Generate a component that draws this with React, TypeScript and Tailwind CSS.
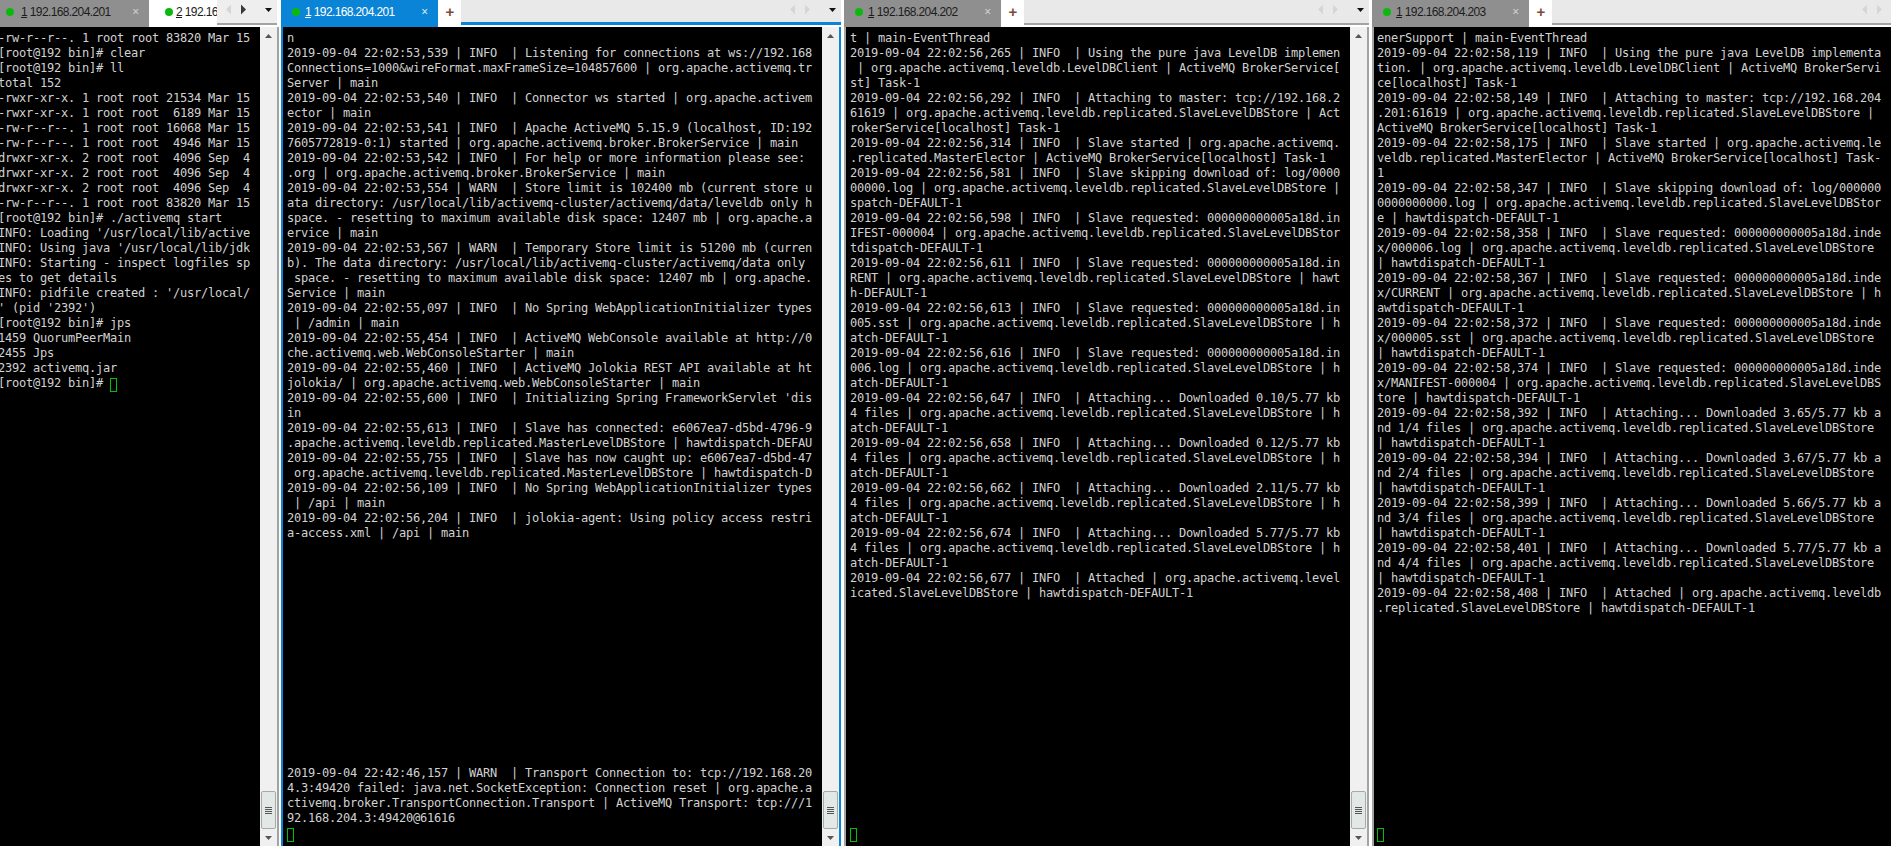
// App.tsx
const pane1 = [
  "-rw-r--r--. 1 root root 83820 Mar 15",
  "[root@192 bin]# clear",
  "[root@192 bin]# ll",
  "total 152",
  "-rwxr-xr-x. 1 root root 21534 Mar 15",
  "-rwxr-xr-x. 1 root root  6189 Mar 15",
  "-rw-r--r--. 1 root root 16068 Mar 15",
  "-rw-r--r--. 1 root root  4946 Mar 15",
  "drwxr-xr-x. 2 root root  4096 Sep  4",
  "drwxr-xr-x. 2 root root  4096 Sep  4",
  "drwxr-xr-x. 2 root root  4096 Sep  4",
  "-rw-r--r--. 1 root root 83820 Mar 15",
  "[root@192 bin]# ./activemq start",
  "INFO: Loading '/usr/local/lib/active",
  "INFO: Using java '/usr/local/lib/jdk",
  "INFO: Starting - inspect logfiles sp",
  "es to get details",
  "INFO: pidfile created : '/usr/local/",
  "' (pid '2392')",
  "[root@192 bin]# jps",
  "1459 QuorumPeerMain",
  "2455 Jps",
  "2392 activemq.jar",
  "[root@192 bin]# ",
];

const pane2 = [
  "n",
  "2019-09-04 22:02:53,539 | INFO  | Listening for connections at ws://192.168",
  "Connections=1000&wireFormat.maxFrameSize=104857600 | org.apache.activemq.tr",
  "Server | main",
  "2019-09-04 22:02:53,540 | INFO  | Connector ws started | org.apache.activem",
  "ector | main",
  "2019-09-04 22:02:53,541 | INFO  | Apache ActiveMQ 5.15.9 (localhost, ID:192",
  "7605772819-0:1) started | org.apache.activemq.broker.BrokerService | main",
  "2019-09-04 22:02:53,542 | INFO  | For help or more information please see:",
  ".org | org.apache.activemq.broker.BrokerService | main",
  "2019-09-04 22:02:53,554 | WARN  | Store limit is 102400 mb (current store u",
  "ata directory: /usr/local/lib/activemq-cluster/activemq/data/leveldb only h",
  "space. - resetting to maximum available disk space: 12407 mb | org.apache.a",
  "ervice | main",
  "2019-09-04 22:02:53,567 | WARN  | Temporary Store limit is 51200 mb (curren",
  "b). The data directory: /usr/local/lib/activemq-cluster/activemq/data only",
  " space. - resetting to maximum available disk space: 12407 mb | org.apache.",
  "Service | main",
  "2019-09-04 22:02:55,097 | INFO  | No Spring WebApplicationInitializer types",
  " | /admin | main",
  "2019-09-04 22:02:55,454 | INFO  | ActiveMQ WebConsole available at http://0",
  "che.activemq.web.WebConsoleStarter | main",
  "2019-09-04 22:02:55,460 | INFO  | ActiveMQ Jolokia REST API available at ht",
  "jolokia/ | org.apache.activemq.web.WebConsoleStarter | main",
  "2019-09-04 22:02:55,600 | INFO  | Initializing Spring FrameworkServlet 'dis",
  "in",
  "2019-09-04 22:02:55,613 | INFO  | Slave has connected: e6067ea7-d5bd-4796-9",
  ".apache.activemq.leveldb.replicated.MasterLevelDBStore | hawtdispatch-DEFAU",
  "2019-09-04 22:02:55,755 | INFO  | Slave has now caught up: e6067ea7-d5bd-47",
  " org.apache.activemq.leveldb.replicated.MasterLevelDBStore | hawtdispatch-D",
  "2019-09-04 22:02:56,109 | INFO  | No Spring WebApplicationInitializer types",
  " | /api | main",
  "2019-09-04 22:02:56,204 | INFO  | jolokia-agent: Using policy access restri",
  "a-access.xml | /api | main",
  ...Array(15).fill(""),
  "2019-09-04 22:42:46,157 | WARN  | Transport Connection to: tcp://192.168.20",
  "4.3:49420 failed: java.net.SocketException: Connection reset | org.apache.a",
  "ctivemq.broker.TransportConnection.Transport | ActiveMQ Transport: tcp:///1",
  "92.168.204.3:49420@61616",
  "",
];

const pane3 = [
  "t | main-EventThread",
  "2019-09-04 22:02:56,265 | INFO  | Using the pure java LevelDB implemen",
  " | org.apache.activemq.leveldb.LevelDBClient | ActiveMQ BrokerService[",
  "st] Task-1",
  "2019-09-04 22:02:56,292 | INFO  | Attaching to master: tcp://192.168.2",
  "61619 | org.apache.activemq.leveldb.replicated.SlaveLevelDBStore | Act",
  "rokerService[localhost] Task-1",
  "2019-09-04 22:02:56,314 | INFO  | Slave started | org.apache.activemq.",
  ".replicated.MasterElector | ActiveMQ BrokerService[localhost] Task-1",
  "2019-09-04 22:02:56,581 | INFO  | Slave skipping download of: log/0000",
  "00000.log | org.apache.activemq.leveldb.replicated.SlaveLevelDBStore |",
  "spatch-DEFAULT-1",
  "2019-09-04 22:02:56,598 | INFO  | Slave requested: 000000000005a18d.in",
  "IFEST-000004 | org.apache.activemq.leveldb.replicated.SlaveLevelDBStor",
  "tdispatch-DEFAULT-1",
  "2019-09-04 22:02:56,611 | INFO  | Slave requested: 000000000005a18d.in",
  "RENT | org.apache.activemq.leveldb.replicated.SlaveLevelDBStore | hawt",
  "h-DEFAULT-1",
  "2019-09-04 22:02:56,613 | INFO  | Slave requested: 000000000005a18d.in",
  "005.sst | org.apache.activemq.leveldb.replicated.SlaveLevelDBStore | h",
  "atch-DEFAULT-1",
  "2019-09-04 22:02:56,616 | INFO  | Slave requested: 000000000005a18d.in",
  "006.log | org.apache.activemq.leveldb.replicated.SlaveLevelDBStore | h",
  "atch-DEFAULT-1",
  "2019-09-04 22:02:56,647 | INFO  | Attaching... Downloaded 0.10/5.77 kb",
  "4 files | org.apache.activemq.leveldb.replicated.SlaveLevelDBStore | h",
  "atch-DEFAULT-1",
  "2019-09-04 22:02:56,658 | INFO  | Attaching... Downloaded 0.12/5.77 kb",
  "4 files | org.apache.activemq.leveldb.replicated.SlaveLevelDBStore | h",
  "atch-DEFAULT-1",
  "2019-09-04 22:02:56,662 | INFO  | Attaching... Downloaded 2.11/5.77 kb",
  "4 files | org.apache.activemq.leveldb.replicated.SlaveLevelDBStore | h",
  "atch-DEFAULT-1",
  "2019-09-04 22:02:56,674 | INFO  | Attaching... Downloaded 5.77/5.77 kb",
  "4 files | org.apache.activemq.leveldb.replicated.SlaveLevelDBStore | h",
  "atch-DEFAULT-1",
  "2019-09-04 22:02:56,677 | INFO  | Attached | org.apache.activemq.level",
  "icated.SlaveLevelDBStore | hawtdispatch-DEFAULT-1",
  ...Array(16).fill(""),
];

const pane4 = [
  "enerSupport | main-EventThread",
  "2019-09-04 22:02:58,119 | INFO  | Using the pure java LevelDB implementa",
  "tion. | org.apache.activemq.leveldb.LevelDBClient | ActiveMQ BrokerServi",
  "ce[localhost] Task-1",
  "2019-09-04 22:02:58,149 | INFO  | Attaching to master: tcp://192.168.204",
  ".201:61619 | org.apache.activemq.leveldb.replicated.SlaveLevelDBStore |",
  "ActiveMQ BrokerService[localhost] Task-1",
  "2019-09-04 22:02:58,175 | INFO  | Slave started | org.apache.activemq.le",
  "veldb.replicated.MasterElector | ActiveMQ BrokerService[localhost] Task-",
  "1",
  "2019-09-04 22:02:58,347 | INFO  | Slave skipping download of: log/000000",
  "0000000000.log | org.apache.activemq.leveldb.replicated.SlaveLevelDBStor",
  "e | hawtdispatch-DEFAULT-1",
  "2019-09-04 22:02:58,358 | INFO  | Slave requested: 000000000005a18d.inde",
  "x/000006.log | org.apache.activemq.leveldb.replicated.SlaveLevelDBStore",
  "| hawtdispatch-DEFAULT-1",
  "2019-09-04 22:02:58,367 | INFO  | Slave requested: 000000000005a18d.inde",
  "x/CURRENT | org.apache.activemq.leveldb.replicated.SlaveLevelDBStore | h",
  "awtdispatch-DEFAULT-1",
  "2019-09-04 22:02:58,372 | INFO  | Slave requested: 000000000005a18d.inde",
  "x/000005.sst | org.apache.activemq.leveldb.replicated.SlaveLevelDBStore",
  "| hawtdispatch-DEFAULT-1",
  "2019-09-04 22:02:58,374 | INFO  | Slave requested: 000000000005a18d.inde",
  "x/MANIFEST-000004 | org.apache.activemq.leveldb.replicated.SlaveLevelDBS",
  "tore | hawtdispatch-DEFAULT-1",
  "2019-09-04 22:02:58,392 | INFO  | Attaching... Downloaded 3.65/5.77 kb a",
  "nd 1/4 files | org.apache.activemq.leveldb.replicated.SlaveLevelDBStore",
  "| hawtdispatch-DEFAULT-1",
  "2019-09-04 22:02:58,394 | INFO  | Attaching... Downloaded 3.67/5.77 kb a",
  "nd 2/4 files | org.apache.activemq.leveldb.replicated.SlaveLevelDBStore",
  "| hawtdispatch-DEFAULT-1",
  "2019-09-04 22:02:58,399 | INFO  | Attaching... Downloaded 5.66/5.77 kb a",
  "nd 3/4 files | org.apache.activemq.leveldb.replicated.SlaveLevelDBStore",
  "| hawtdispatch-DEFAULT-1",
  "2019-09-04 22:02:58,401 | INFO  | Attaching... Downloaded 5.77/5.77 kb a",
  "nd 4/4 files | org.apache.activemq.leveldb.replicated.SlaveLevelDBStore",
  "| hawtdispatch-DEFAULT-1",
  "2019-09-04 22:02:58,408 | INFO  | Attached | org.apache.activemq.leveldb",
  ".replicated.SlaveLevelDBStore | hawtdispatch-DEFAULT-1",
  ...Array(15).fill(""),
];

function Terminal({ lines }: { lines: string[] }) {
  return (
    <div className="pt-[4px] font-['DejaVu_Sans_Mono',monospace] text-[12px] leading-[15px] tracking-[-0.224px] text-[#d2d2d2]">
      {lines.map((line, i) => (
        <div key={i} className="flex h-[15px] whitespace-pre">
          {line}
          {i === lines.length - 1 && (
            <span className="mt-[2px] h-[14px] w-[7px] border border-[#00c000]" />
          )}
        </div>
      ))}
    </div>
  );
}

function ScrollBar() {
  return (
    <div className="flex w-[17px] shrink-0 flex-col items-center bg-[#f0f0f0]">
      <svg width="9" height="5" viewBox="0 0 9 5" className="mt-[7px]">
        <path d="M4.5 0 L8 4 L1 4 Z" fill="#555" />
      </svg>
      <div className="flex-1" />
      <div className="flex h-[38px] w-[15px] flex-col items-center justify-center gap-[1px] rounded-[2px] border border-[#a8a8a8] bg-[#e2e8e6]">
        <span className="h-[1px] w-[7px] bg-[#555]" />
        <span className="h-[1px] w-[7px] bg-[#555]" />
        <span className="h-[1px] w-[7px] bg-[#555]" />
        <span className="h-[1px] w-[7px] bg-[#555]" />
      </div>
      <svg width="9" height="5" viewBox="0 0 9 5" className="mt-[7px] mb-[5px]">
        <path d="M1 0 L8 0 L4.5 4 Z" fill="#555" />
      </svg>
    </div>
  );
}

function Dot() {
  return <span className="h-[8px] w-[8px] shrink-0 rounded-full bg-[#0db80d]" />;
}

function TabLabel({ n, rest }: { n: string; rest: string }) {
  return (
    <span className="font-['Liberation_Sans',sans-serif] text-[12px] tracking-[-0.62px] whitespace-pre">
      <span className="underline">{n}</span> {rest}
    </span>
  );
}

function Tab({ rest, active }: { rest: string; active?: boolean }) {
  return (
    <div
      className={`flex h-[27px] w-[157px] shrink-0 items-center pb-[3px] ${
        active ? "bg-[#0a84d6] text-white" : "bg-[#8f8f8f] text-[#1c1c1c]"
      }`}
    >
      <span className="flex w-[24px] justify-end pr-[5px]">
        <Dot />
      </span>
      <TabLabel n="1" rest={rest} />
      <span className={`ml-auto mr-[10px] text-[12px] ${active ? "text-[#d5e8f5]" : "text-[#cfcfcf]"}`}>×</span>
    </div>
  );
}

function PlusTab() {
  return (
    <div className="ml-[1px] flex h-[24px] w-[22px] shrink-0 items-center justify-center bg-white font-['Liberation_Sans',sans-serif] text-[15px] font-bold text-[#7a4b3c]">
      +
    </div>
  );
}

function Arrows({ rightDark, menu = true }: { rightDark?: boolean; menu?: boolean }) {
  return (
    <div className="ml-auto flex h-[23px] items-center pb-[4px]">
      <svg width="7" height="11" viewBox="0 0 7 11">
        <path d="M6 0.5 L1 5.5 L6 10.5 Z" fill="#d2d8d2" />
      </svg>
      <svg width="7" height="11" viewBox="0 0 7 11" className="ml-[8px]">
        <path d="M1 0.5 L6 5.5 L1 10.5 Z" fill={rightDark ? "#3a3a3a" : "#d2d8d2"} />
      </svg>
      {menu && (
        <svg width="7" height="4" viewBox="0 0 7 4" className="ml-[18px] mr-[5px]">
          <path d="M0 0 L7 0 L3.5 4 Z" fill="#111" />
        </svg>
      )}
      {!menu && <span className="w-[8px]" />}
    </div>
  );
}

function Filler({ line, children }: { line: string; children: React.ReactNode }) {
  return (
    <div className={`flex h-[25px] min-w-0 flex-1 border-b-2 bg-[#e9e9e9] ${line}`}>{children}</div>
  );
}

export default function App() {
  return (
    <div className="flex h-[846px] w-[1891px] overflow-hidden bg-white">
      {/* left window, two tabs */}
      <div className="flex w-[281px] shrink-0 flex-col">
        <div className="flex h-[27px] shrink-0 bg-white">
          <div className="flex h-[27px] w-[149px] shrink-0 items-center pb-[3px] bg-[#8f8f8f] text-[#1c1c1c]">
            <span className="flex w-[14px] justify-end">
              <Dot />
            </span>
            <span className="w-[7px]" />
            <TabLabel n="1" rest="192.168.204.201" />
            <span className="ml-auto mr-[10px] text-[12px] text-[#cfcfcf]">×</span>
          </div>
          <div className="ml-[1px] flex h-[24px] w-[67px] shrink-0 items-center overflow-hidden bg-white pb-[1px] pl-[15px] text-[#1c1c1c]">
            <Dot />
            <span className="w-[3px] shrink-0" />
            <TabLabel n="2" rest="192.168.204.201" />
          </div>
          <div className="flex h-[25px] w-[60px] shrink-0 border-b-2 border-[#a3a3a3] bg-[#eeeeee]">
            <Arrows rightDark />
          </div>
          <div className="h-[27px] w-[4px] bg-white" />
        </div>
        <div className="flex min-h-0 flex-1">
          <div className="w-[260px] overflow-hidden bg-black -indent-[2px]">
            <Terminal lines={pane1} />
          </div>
          <ScrollBar />
          <div className="w-[2px] bg-[#a3a3a3]" />
        </div>
      </div>

      {/* active window */}
      <div className="flex w-[563px] shrink-0 flex-col">
        <div className="flex h-[27px] shrink-0 pr-[3px]">
          <Tab rest="192.168.204.201" active />
          <PlusTab />
          <div className="flex h-[25px] min-w-0 flex-1 border-b-[3px] border-[#0a84d6] bg-[#e9e9e9]">
            <Arrows />
          </div>
        </div>
        <div className="flex min-h-0 flex-1 pr-[3px]">
          <div className="flex min-w-0 flex-1 overflow-hidden border-l-2 border-[#0a84d6] bg-black pl-[4px]">
            <Terminal lines={pane2} />
          </div>
          <ScrollBar />
          <div className="w-[2px] bg-[#0a84d6]" />
        </div>
      </div>

      {/* second server */}
      <div className="flex w-[528px] shrink-0 flex-col">
        <div className="flex h-[27px] shrink-0 pr-[3px]">
          <Tab rest="192.168.204.202" />
          <PlusTab />
          <Filler line="border-[#a3a3a3]">
            <Arrows />
          </Filler>
        </div>
        <div className="flex min-h-0 flex-1 pr-[3px]">
          <div className="flex min-w-0 flex-1 overflow-hidden border-l-2 border-[#a3a3a3] bg-black pl-[4px]">
            <Terminal lines={pane3} />
          </div>
          <ScrollBar />
          <div className="w-[2px] bg-[#a3a3a3]" />
        </div>
      </div>

      {/* third server */}
      <div className="flex min-w-0 flex-1 flex-col">
        <div className="flex h-[27px] shrink-0">
          <Tab rest="192.168.204.203" />
          <PlusTab />
          <Filler line="border-[#a3a3a3]">
            <Arrows menu={false} />
          </Filler>
        </div>
        <div className="min-h-0 flex-1 overflow-hidden border-l-2 border-[#a3a3a3] bg-black pl-[3px]">
          <Terminal lines={pane4} />
        </div>
      </div>
    </div>
  );
}
